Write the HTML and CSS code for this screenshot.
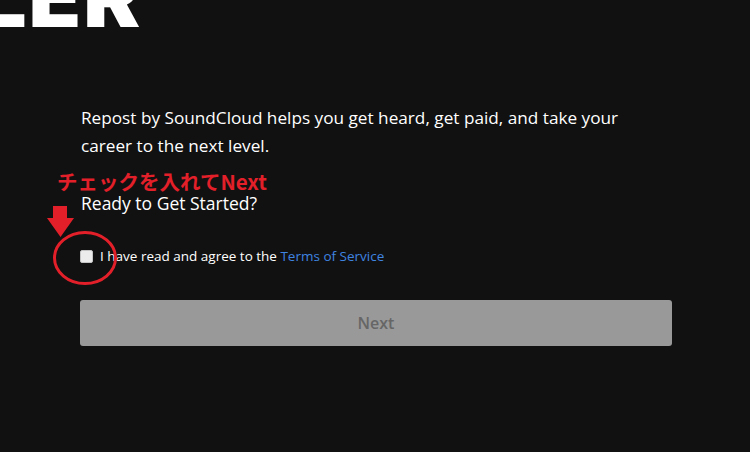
FILE: index.html
```html
<!DOCTYPE html>
<html lang="en">
<head>
<meta charset="utf-8">
<title>Repost by SoundCloud</title>
<link rel="stylesheet" href="styles.css">
</head>
<body>
<div class="hero"><span class="hero-text">TRAILER</span></div>
<main class="content">
  <p class="intro">Repost by SoundCloud helps you get heard, get paid, and take your career to the next level.</p>
  <p class="ready">Ready to Get Started?</p>
  <label class="agree">
    <input type="checkbox" class="check">
    <span>I have read and agree to the <a class="link" href="#">Terms of Service</a></span>
  </label>
  <button class="next" type="button" disabled>Next</button>

  <div class="note">チェックを入れてNext</div>
  <svg class="arrow" width="28" height="34" viewBox="0 0 28 34">
    <path d="M6 0 H20 V12 H27 L13.5 31 L0 12 H6 Z" fill="#e3202a"/>
  </svg>
  <svg class="ring" width="70" height="60" viewBox="0 0 70 60">
    <ellipse cx="35" cy="29" rx="30.5" ry="25.5" fill="none" stroke="#e3202a" stroke-width="3"/>
  </svg>
</main>
</body>
</html>
```

FILE: styles.css
```css
html, body {
  margin: 0;
  padding: 0;
  background: #111111;
}

body {
  width: 750px;
  height: 452px;
  overflow: hidden;
  color: #ffffff;
  font-family: "Open Sans", "Liberation Sans", sans-serif;
}

.hero {
  height: 27px;
  overflow: hidden;
  position: relative;
}

.hero-text {
  display: block;
  margin-top: -46px;
  margin-left: -240px;
  font-family: "Inter", "Liberation Sans", sans-serif;
  font-weight: 900;
  font-size: 86px;
  line-height: 86px;
  letter-spacing: 2px;
  color: #ffffff;
}

.content {
  position: relative;
  width: 592px;
  margin: 0 0 0 80px;
  padding-top: 77px;
}

.intro {
  margin: 0;
  font-size: 17.2px;
  line-height: 28px;
  padding-left: 1px;
}

.ready {
  margin: 31px 0 0 0;
  font-size: 17.5px;
  line-height: 24px;
  padding-left: 1px;
}

.agree {
  display: flex;
  align-items: center;
  gap: 7px;
  margin-top: 33px;
  font-size: 13.5px;
  line-height: 16px;
}

.check {
  appearance: none;
  -webkit-appearance: none;
  width: 13px;
  height: 13px;
  margin: 0;
  background: #ececec;
  border: 1px solid #c4c4c4;
  border-radius: 2px;
}

.link {
  color: #3f84e0;
  text-decoration: none;
}

.next {
  display: block;
  width: 592px;
  height: 46px;
  margin-top: 36px;
  border: none;
  border-radius: 3px;
  background: #999999;
  color: #666666;
  font-family: "Open Sans", "Liberation Sans", sans-serif;
  font-size: 16px;
  font-weight: 600;
}

.note {
  position: absolute;
  left: -23px;
  top: 142px;
  color: #e3202a;
  font-family: "Noto Sans CJK JP", sans-serif;
  font-weight: 700;
  font-size: 20.5px;
  line-height: 24px;
  white-space: nowrap;
}

.arrow {
  position: absolute;
  left: -33px;
  top: 179px;
}

.ring {
  position: absolute;
  left: -30px;
  top: 202px;
}
```
